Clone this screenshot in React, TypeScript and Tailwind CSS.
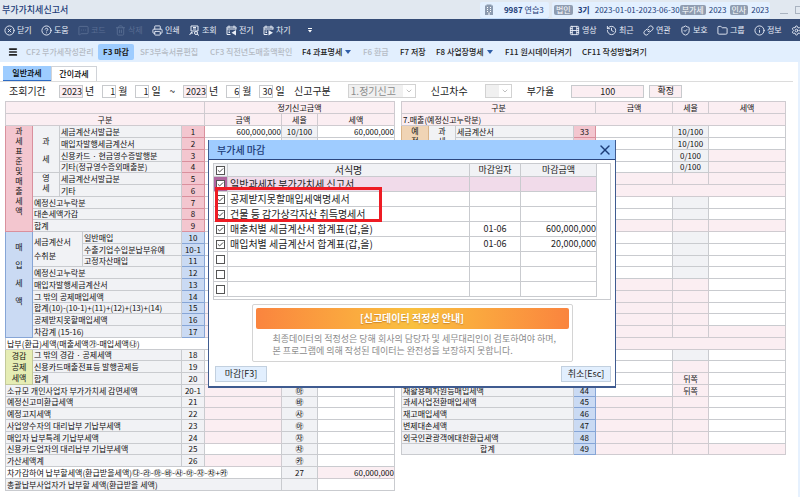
import type { ReactNode } from "react";
import clsx from "clsx";
import {
    Check,
    ChevronDown,
    CircleHelp,
    CircleX,
    Film,
    Folder,
    History,
    Info,
    Link,
    Menu,
    MessageSquareMore,
    Printer,
    Settings,
    ShieldCheck,
    Trash2,
    X,
} from "lucide-react";

type Tone = "white" | "gray" | "pink" | "red" | "blue" | "green" | "orange";

type Head = {
    text: string;
    cols?: number;
    rows?: number;
    tone?: Tone;
    align?: "left" | "center";
    vertical?: "tight" | "loose";
};

type Row = {
    heads: Head[];
    no?: string;
    noTone?: Tone;
    amount?: string;
    amountTone?: Tone;
    rate?: string;
    rateTone?: Tone;
    tax?: string;
    taxTone?: Tone;
};

const tones: Record<Tone, string> = {
    white: "bg-white border-[#c9cbcf]",
    gray: "bg-[#f1f2f5] border-[#c9cbcf]",
    pink: "bg-[#fbeef2] border-[#cfcbd0]",
    red: "bg-[#f3c6cf] border-[#d9909d]",
    blue: "bg-[#cadaf3] border-[#86a5d6]",
    green: "bg-[#e6edb4] border-[#c3c99a]",
    orange: "bg-[#f0d4b5] border-[#d9b48a]",
};

const leftRows: Row[] = [
    {
        heads: [
            { text: "과세표준및매출세액", rows: 9, tone: "red", vertical: "tight" },
            { text: "과세", rows: 4, vertical: "loose" },
            { text: "세금계산서발급분", cols: 2 },
        ],
        no: "1", noTone: "red", amount: "600,000,000", rate: "10/100", tax: "60,000,000",
    },
    { heads: [{ text: "매입자발행세금계산서", cols: 2 }], no: "2", noTone: "red", rate: "10/100" },
    { heads: [{ text: "신용카드 · 현금영수증발행분", cols: 2 }], no: "3", noTone: "red" },
    { heads: [{ text: "기타(정규영수증외매출분)", cols: 2 }], no: "4", noTone: "red" },
    {
        heads: [
            { text: "영세", rows: 2, vertical: "tight" },
            { text: "세금계산서발급분", cols: 2 },
        ],
        no: "5", noTone: "red", taxTone: "pink",
    },
    { heads: [{ text: "기타", cols: 2 }], no: "6", noTone: "red", taxTone: "pink" },
    { heads: [{ text: "예정신고누락분", cols: 3 }], no: "7", noTone: "red" },
    { heads: [{ text: "대손세액가감", cols: 3 }], no: "8", noTone: "red" },
    { heads: [{ text: "합계", cols: 3 }], no: "9", noTone: "red" },
    {
        heads: [
            { text: "매입세액", rows: 9, tone: "blue", vertical: "loose" },
            { text: "세금계산서\n수취분", cols: 2, rows: 3 },
            { text: "일반매입" },
        ],
        no: "10", noTone: "blue",
    },
    { heads: [{ text: "수출기업수입분납부유예" }], no: "10-1", noTone: "blue" },
    { heads: [{ text: "고정자산매입" }], no: "11", noTone: "blue" },
    { heads: [{ text: "예정신고누락분", cols: 3 }], no: "12", noTone: "blue" },
    { heads: [{ text: "매입자발행세금계산서", cols: 3 }], no: "13", noTone: "blue" },
    { heads: [{ text: "그 밖의 공제매입세액", cols: 3 }], no: "14", noTone: "blue" },
    { heads: [{ text: "합계(10)-(10-1)+(11)+(12)+(13)+(14)", cols: 3 }], no: "15", noTone: "blue", amountTone: "pink" },
    { heads: [{ text: "공제받지못할매입세액", cols: 3 }], no: "16", noTone: "blue", amountTone: "pink" },
    { heads: [{ text: "차감계 (15-16)", cols: 3 }], no: "17", noTone: "blue", amountTone: "pink" },
    { heads: [{ text: "납부(환급)세액(매출세액㉮-매입세액㉯)", cols: 6, tone: "white" }] },
    {
        heads: [
            { text: "경감공제세액", rows: 3, tone: "green", vertical: "tight" },
            { text: "그 밖의 경감 · 공제세액", cols: 3 },
        ],
        no: "18",
    },
    { heads: [{ text: "신용카드매출전표등 발행공제등", cols: 3 }], no: "19" },
    { heads: [{ text: "합계", cols: 3 }], no: "20", amountTone: "pink" },
    { heads: [{ text: "소규모 개인사업자 부가가치세 감면세액", cols: 4 }], no: "20-1", amountTone: "pink", rate: "㉲" },
    { heads: [{ text: "예정신고미환급세액", cols: 4 }], no: "21", amountTone: "pink", rate: "㉳" },
    { heads: [{ text: "예정고지세액", cols: 4 }], no: "22", amountTone: "pink", rate: "㉴" },
    { heads: [{ text: "사업양수자의 대리납부 기납부세액", cols: 4 }], no: "23", amountTone: "pink", rate: "㉵" },
    { heads: [{ text: "매입자 납부특례 기납부세액", cols: 4 }], no: "24", amountTone: "pink", rate: "㉶" },
    { heads: [{ text: "신용카드업자의 대리납부 기납부세액", cols: 4 }], no: "25", rate: "㉷" },
    { heads: [{ text: "가산세액계", cols: 4 }], no: "26", amountTone: "pink", rate: "㉸" },
    {
        heads: [{ text: "차가감하여 납부할세액(환급받을세액)㉰-㉱-㉲-㉳-㉴-㉵-㉶-㉷+㉸", cols: 6, tone: "white" }],
        rate: "27", tax: "60,000,000", taxTone: "pink",
    },
    { heads: [{ text: "총괄납부사업자가 납부할 세액(환급받을 세액)", cols: 6 }] },
];

const blank: Head[] = [{ text: "", cols: 3 }];

const rightRows: Row[] = [
    {
        heads: [
            { text: "예정", rows: 5, tone: "orange", vertical: "tight" },
            { text: "과세", rows: 2, vertical: "tight" },
            { text: "세금계산서" },
        ],
        no: "33", noTone: "red", rate: "10/100",
    },
    { heads: [{ text: "기타" }], no: "34", noTone: "red", rate: "10/100" },
    { heads: [{ text: "", cols: 2 }], noTone: "red", rate: "0/100", taxTone: "pink" },
    { heads: [{ text: "", cols: 2 }], noTone: "red", rate: "0/100", taxTone: "pink" },
    { heads: [{ text: "", cols: 2 }], noTone: "red", amountTone: "pink", rateTone: "pink", taxTone: "pink" },
    { heads: [{ text: "", cols: 7, tone: "pink" }] },
    { heads: blank, noTone: "blue" },
    { heads: blank, noTone: "blue" },
    { heads: blank, noTone: "blue", amountTone: "pink", rateTone: "pink", taxTone: "pink" },
    { heads: blank, noTone: "blue" },
    { heads: blank, noTone: "blue" },
    { heads: blank, noTone: "blue" },
    { heads: blank, noTone: "blue" },
    { heads: blank, noTone: "blue", amountTone: "pink", rateTone: "pink" },
    { heads: blank, noTone: "blue", amountTone: "pink", rateTone: "pink" },
    { heads: blank, noTone: "blue", amountTone: "pink", rateTone: "pink" },
    { heads: blank, noTone: "blue", amountTone: "pink", rateTone: "pink" },
    { heads: blank, noTone: "blue", amountTone: "pink", rateTone: "pink", taxTone: "pink" },
    { heads: [{ text: "", cols: 7, tone: "pink" }] },
    { heads: blank, noTone: "blue" },
    { heads: blank, noTone: "blue", rateTone: "pink" },
    { heads: blank, noTone: "blue", rate: "뒤쪽", rateTone: "pink" },
    { heads: [{ text: "재활용폐자원등매입세액", cols: 3 }], no: "44", noTone: "blue", rate: "뒤쪽", rateTone: "pink" },
    { heads: [{ text: "과세사업전환매입세액", cols: 3 }], no: "45", noTone: "blue", amountTone: "pink", rateTone: "pink" },
    { heads: [{ text: "재고매입세액", cols: 3 }], no: "46", noTone: "blue", amountTone: "pink", rateTone: "pink" },
    { heads: [{ text: "변제대손세액", cols: 3 }], no: "47", noTone: "blue", amountTone: "pink", rateTone: "pink" },
    { heads: [{ text: "외국인관광객에대한환급세액", cols: 3 }], no: "48", noTone: "blue", amountTone: "pink", rateTone: "pink" },
    { heads: [{ text: "합계", cols: 3, align: "center" }], no: "49", noTone: "blue", amountTone: "pink", rateTone: "pink", taxTone: "pink" },
];

const documents = [
    { name: "일반과세자 부가가치세 신고서", checked: true, selected: true },
    { name: "공제받지못할매입세액명세서", checked: true },
    { name: "건물 등 감가상각자산 취득명세서", checked: true },
    { name: "매출처별 세금계산서 합계표(갑,을)", checked: true, date: "01-06", amount: "600,000,000" },
    { name: "매입처별 세금계산서 합계표(갑,을)", checked: true, date: "01-06", amount: "20,000,000" },
    { name: "", checked: false },
    { name: "", checked: false },
    { name: "", checked: false },
];

const iconClass = "size-[11px] shrink-0";

const leftTools = [
    { label: "닫기", icon: <CircleX className={iconClass} /> },
    { label: "도움", icon: <CircleHelp className={iconClass} /> },
    { label: "코드", icon: <MessageSquareMore className={iconClass} />, disabled: true },
    { label: "삭제", icon: <Trash2 className={iconClass} />, disabled: true },
    { label: "인쇄", icon: <Printer className={iconClass} /> },
    { label: "조회", icon: <LookupIcon /> },
    { label: "전기", icon: <PeriodIcon back /> },
    { label: "차기", icon: <PeriodIcon /> },
];

const rightTools = [
    { label: "영상", icon: <Film className={iconClass} /> },
    { label: "최근", icon: <History className={iconClass} /> },
    { label: "연관", icon: <Link className={iconClass} /> },
    { label: "보호", icon: <ShieldCheck className={iconClass} /> },
    { label: "그룹", icon: <Folder className={iconClass} /> },
    { label: "정보", icon: <Info className={iconClass} /> },
];

const functionKeys = [
    { label: "CF2 부가세작성관리", width: "w-[72px]", disabled: true },
    { label: "F3 마감", width: "w-9", active: true },
    { label: "SF3부속서류편집", width: "w-[70px]", disabled: true },
    { label: "CF3 직전년도매출액확인", width: "w-[92px]", disabled: true },
    { label: "F4 과표명세", width: "w-[61px]", menu: true },
    { label: "F6 환급", width: "w-[37px]", disabled: true },
    { label: "F7 저장", width: "w-9" },
    { label: "F8 사업장명세", width: "w-[69px]", menu: true },
    { label: "F11 원시데이타켜기", width: "w-[77px]" },
    { label: "CF11 작성방법켜기", width: "w-[77px]" },
];

function LookupIcon() {
    return (
        <svg viewBox="0 0 22 22" className={iconClass} fill="none" stroke="currentColor" strokeWidth="2">
            <path d="M4 2h14v10H4zM8 5h6M8 8h6M3 16h5M1 20l5-6" />
            <circle cx="14" cy="16" r="3" />
            <path d="M16 18l4 3" />
        </svg>
    );
}

function PeriodIcon({ back = false }: { back?: boolean }) {
    return (
        <svg viewBox="0 0 22 22" className={iconClass} fill="none" stroke="currentColor" strokeWidth="2">
            <path d="M9 19H2V4h18v5M2 8h18M6 1v5M16 1v5M5 12h3M5 15h3" />
            <path d={back ? "M20 10v11l-9-5.5z" : "M11 10v11l9-5.5z"} fill="currentColor" stroke="none" />
        </svg>
    );
}

function BuildingIcon() {
    return (
        <svg viewBox="0 0 20 22" className="h-[11px] w-[10px]">
            <path d="M5 1h10v2h3v19H2V3h3z" fill="#8c9bb0" />
            <path d="M6 6h2v2H6zM12 6h2v2h-2zM6 10h2v2H6zM12 10h2v2h-2zM6 14h2v2H6zM12 14h2v2h-2zM9 17h2v5H9z" fill="#fff" />
        </svg>
    );
}

function Badge({ children }: { children: ReactNode }) {
    return <span className="rounded-xs bg-[#8f9db1] px-0.5 leading-[10px] text-white">{children}</span>;
}

function TitleBar() {
    return (
        <header className="flex h-[19px] items-center bg-[#e1e8f0] pl-0.5 text-[#1c3c78]">
            <h1 className="flex-1 text-[9px] font-medium">부가가치세신고서</h1>
            <div className="flex h-4 w-[69px] items-center rounded-xs bg-[#e3f0ff] pl-1 shadow-[0_1px_0_#c3dcf8]">
                <BuildingIcon />
                <span className="pl-2.5"><b>9987</b> 연습3</span>
            </div>
            <div className="ml-[3px] flex h-4 items-center rounded-xs bg-[#e3f0ff] pl-0.5">
                <Badge>법인</Badge>
                <b className="px-[5px]">3기</b>
                <span>2023-01-01-2023-06-30</span>
                <Badge>부가세</Badge>
                <span className="px-[3px]">2023</span>
                <Badge>인사</Badge>
                <span className="pr-px pl-[3px]">2023</span>
            </div>
            <div className="ml-2.5 flex w-5 shrink-0 items-end gap-[7px] overflow-hidden">
                <span className="w-2 shrink-0 border-b border-[#a9b3c0]" />
                <span className="h-2 w-2 shrink-0 border border-[#a9b3c0]" />
            </div>
        </header>
    );
}

function ToolBar() {
    return (
        <nav className="flex h-[22px] items-center overflow-hidden bg-[#354c76] pl-1 text-[#e9eef7]">
            {leftTools.map((tool) => (
                <button
                    key={tool.label}
                    disabled={tool.disabled}
                    className="flex w-[37px] shrink-0 items-center gap-0.5 whitespace-nowrap disabled:text-[#596d93]"
                >
                    {tool.icon}
                    {tool.label}
                </button>
            ))}
            <svg viewBox="0 0 8 10" className="ml-2 h-[5px] w-1 fill-white">
                <path d="M0 0h8v2H0zM0 4h8L4 9z" />
            </svg>
            <div className="ml-auto flex">
                {rightTools.map((tool) => (
                    <button key={tool.label} className="flex w-[37px] shrink-0 items-center gap-0.5 whitespace-nowrap">
                        {tool.icon}
                        {tool.label}
                    </button>
                ))}
                <button aria-label="설정" className="w-[9px] overflow-hidden">
                    <Settings className={iconClass} />
                </button>
            </div>
        </nav>
    );
}

function FunctionBar() {
    return (
        <nav className="flex h-[21px] items-center bg-[#e2effe] pl-2 text-[#222]">
            <Menu className="mr-2 size-[10px]" strokeWidth={4} />
            {functionKeys.map((key) => (
                <button
                    key={key.label}
                    disabled={key.disabled}
                    className={clsx(
                        "flex h-4 shrink-0 items-center gap-[3px] whitespace-nowrap",
                        key.width,
                        key.disabled && "text-[#b5bbc4]",
                        key.active ? "mr-1.5 justify-center rounded-xs bg-[#9dccff] font-bold" : "font-medium"
                    )}
                >
                    {key.label}
                    {key.menu && (
                        <svg viewBox="0 0 6 4" className="h-1 w-1.5 fill-[#2f5ea8]">
                            <path d="M0 0h6L3 4z" />
                        </svg>
                    )}
                </button>
            ))}
        </nav>
    );
}

function Tabs() {
    return (
        <div className="mr-[5px] flex h-5 items-end border-b border-[#dcdcdc] pl-[3px]">
            <button className="h-[15px] w-12 border-b border-[#2d6bc4] bg-[#9dccff] font-medium">일반과세</button>
            <button className="h-[15px] w-[46px] border border-b-0 border-[#d0d3d8] bg-white font-medium">간이과세</button>
        </div>
    );
}

function Field({
    label,
    value,
    unit,
    wide = false,
}: {
    label: string;
    value: string;
    unit: string;
    wide?: boolean;
}) {
    return (
        <label className="flex items-center gap-0.5">
            <input
                aria-label={label}
                defaultValue={value}
                className={clsx(
                    "h-[13px] border border-[#c8cacd] text-right text-[9px]",
                    wide ? "w-6 bg-[#fbeef2]" : "w-3.5 bg-white"
                )}
            />
            {unit}
        </label>
    );
}

function DropDown({ label, value, width }: { label: string; value: string; width: string }) {
    return (
        <label className="flex items-center gap-[17px]">
            {label}
            <span className={clsx("relative", width)}>
                <select
                    disabled
                    defaultValue={value}
                    className="block h-[14px] w-full appearance-none border border-[#d2d2d2] bg-[#f0f0f0] pl-0.5 leading-3 text-[#8c8c8c] opacity-100"
                >
                    <option>{value}</option>
                </select>
                <span className="absolute inset-y-px right-px flex w-3 items-center justify-center bg-white text-[#a0a0a0]">
                    <ChevronDown className="size-2" />
                </span>
            </span>
        </label>
    );
}

function FilterBar() {
    return (
        <form className="flex h-[18px] items-center pl-[9px] text-[10px] text-[#222]">
            <span className="w-[50px]">조회기간</span>
            <div className="flex w-[124px] items-center gap-2">
                <Field label="시작 년" value="2023" unit="년" wide />
                <Field label="시작 월" value="1" unit="월" />
                <Field label="시작 일" value="1" unit="일" />
                <span className="pl-px">~</span>
            </div>
            <div className="flex w-[111px] items-center gap-2">
                <Field label="종료 년" value="2023" unit="년" wide />
                <Field label="종료 월" value="6" unit="월" />
                <Field label="종료 일" value="30" unit="일" />
            </div>
            <DropDown label="신고구분" value="1.정기신고" width="w-[68px]" />
            <span className="w-[15px]" />
            <DropDown label="신고차수" value="" width="w-[27px]" />
            <label className="ml-[15px] flex items-center gap-[17px]">
                부가율
                <input
                    defaultValue="100"
                    className="h-[13px] w-[73px] border border-[#c8cacd] bg-[#fbeef2] text-center text-[9px]"
                />
            </label>
            <button type="button" className="ml-[5px] h-[13px] w-[33px] border border-[#c8cacd] bg-[#fbeef2] text-[9px] leading-[10px]">
                확정
            </button>
        </form>
    );
}

function Cell({
    tone = "white",
    align = "center",
    cols,
    rows,
    className,
    children,
}: {
    tone?: Tone;
    align?: "left" | "center" | "right";
    cols?: number;
    rows?: number;
    className?: string;
    children?: ReactNode;
}) {
    return (
        <td
            colSpan={cols}
            rowSpan={rows}
            className={clsx(
                "border p-0",
                tones[tone],
                rows ? "leading-[14px] whitespace-pre-line" : "overflow-hidden leading-[10px] whitespace-nowrap",
                align === "center" && "text-center",
                align === "left" && "pl-px text-left",
                align === "right" && "text-right",
                className
            )}
        >
            {children}
        </td>
    );
}

function VerticalText({ text, spacing }: { text: string; spacing: "tight" | "loose" }) {
    // six letters stand in pairs, everything else one letter a line
    const pairs = text.length === 6;
    const parts = pairs ? text.match(/../g) : text.split("");
    return (
        <div
            className={clsx(
                "flex flex-col items-center",
                pairs ? "leading-[11px]" : "leading-[10px]",
                spacing === "loose" && "gap-2 pt-2.5"
            )}
        >
            {parts?.map((part, i) => <span key={i}>{part}</span>)}
        </div>
    );
}

function ReportRow({ row }: { row: Row }) {
    const full = row.heads[0].cols === 7;
    const numberless = row.heads[0].cols === 6;
    return (
        <tr>
            {row.heads.map((head, i) => (
                <Cell
                    key={i}
                    tone={head.tone ?? "gray"}
                    cols={head.cols}
                    rows={head.rows}
                    align={head.align ?? (head.vertical ? "center" : "left")}
                    className={head.vertical && "align-top"}
                >
                    {head.vertical ? <VerticalText text={head.text} spacing={head.vertical} /> : head.text}
                </Cell>
            ))}
            {!full && (
                <>
                    {!numberless && <Cell tone={row.noTone ?? "gray"}>{row.no}</Cell>}
                    {!numberless && <Cell tone={row.amountTone} align="right">{row.amount}</Cell>}
                    <Cell tone={row.rateTone ?? "gray"}>{row.rate}</Cell>
                    <Cell tone={row.taxTone} align="right">{row.tax}</Cell>
                </>
            )}
        </tr>
    );
}

const tableClass =
    "w-full table-fixed border-collapse text-[#111] [&_tr]:h-3 [&_tr:nth-child(4n)]:h-[11px]";

function LeftTable() {
    return (
        <table className={tableClass}>
            <colgroup>
                <col className="w-[27px]" />
                <col className="w-[27px]" />
                <col className="w-[23px]" />
                <col />
                <col className="w-[23px]" />
                <col className="w-[77px]" />
                <col className="w-9" />
                <col className="w-[77px]" />
            </colgroup>
            <thead>
                <tr>
                    <Cell tone="pink" cols={5} />
                    <Cell tone="pink" cols={3}>정기신고금액</Cell>
                </tr>
                <tr>
                    <Cell tone="pink" cols={5}>구분</Cell>
                    <Cell tone="pink">금액</Cell>
                    <Cell tone="pink">세율</Cell>
                    <Cell tone="pink">세액</Cell>
                </tr>
            </thead>
            <tbody>
                {leftRows.map((row, i) => <ReportRow key={i} row={row} />)}
            </tbody>
        </table>
    );
}

function RightTable() {
    return (
        <table className={tableClass}>
            <colgroup>
                <col className="w-[27px]" />
                <col className="w-[27px]" />
                <col />
                <col className="w-[22px]" />
                <col className="w-[77px]" />
                <col className="w-9" />
                <col className="w-[77px]" />
            </colgroup>
            <thead>
                <tr>
                    <Cell tone="pink" cols={4}>구분</Cell>
                    <Cell tone="pink">금액</Cell>
                    <Cell tone="pink">세율</Cell>
                    <Cell tone="pink">세액</Cell>
                </tr>
                <tr>
                    <Cell tone="pink" cols={7} align="left">7.매출(예정신고누락분)</Cell>
                </tr>
            </thead>
            <tbody>
                {rightRows.map((row, i) => <ReportRow key={i} row={row} />)}
            </tbody>
        </table>
    );
}

function CheckBox({ label, checked }: { label: string; checked: boolean }) {
    return (
        <span className="relative mx-auto block size-[9px]">
            <input
                type="checkbox"
                aria-label={label}
                defaultChecked={checked}
                className="peer block size-[9px] appearance-none border border-[#555] bg-white"
            />
            <Check className="pointer-events-none absolute inset-px hidden size-[7px] text-[#333] peer-checked:block" strokeWidth={3} />
        </span>
    );
}

function ClosingDialog() {
    const cell = "border border-[#c9cbcf] p-0";
    return (
        <div
            role="dialog"
            aria-label="부가세 마감"
            className="absolute top-[140px] left-[208px] w-[408px] border border-t-0 border-b-2 border-[#3f5b90] bg-white text-[#222]"
        >
            <div className="flex h-5 items-center justify-between border-b border-[#2c4780] bg-[#9fccff] pr-0.5 pl-2 text-[10px] text-[#1c3c78]">
                <h2 className="font-medium">부가세 마감</h2>
                <button aria-label="닫기">
                    <X className="size-4" />
                </button>
            </div>
            <div className="px-1 pt-[3px] pb-1">
                <div className="relative border border-[#c9cbcf] pr-3 pb-0.5">
                    <table className="-mt-px -ml-px w-full table-fixed border-collapse text-[10px] leading-[14px]">
                        <colgroup>
                            <col className="w-3.5" />
                            <col />
                            <col className="w-[51px]" />
                            <col className="w-[76px]" />
                        </colgroup>
                        <thead>
                            <tr className="h-[13px] bg-[#f1f2f5] leading-3">
                                <th className={cell}><CheckBox label="전체" checked /></th>
                                <th className={clsx(cell, "font-normal")}>서식명</th>
                                <th className={clsx(cell, "text-[9px] font-normal")}>마감일자</th>
                                <th className={clsx(cell, "text-[9px] font-normal")}>마감금액</th>
                            </tr>
                        </thead>
                        <tbody>
                            {documents.map((doc, i) => (
                                <tr key={i} className={clsx("h-[15px]", doc.selected && "bg-[#f1dbea]")}>
                                    <td className={clsx(cell, doc.selected && "bg-[#b0669f]")}>
                                        <CheckBox label={doc.name} checked={doc.checked} />
                                    </td>
                                    <td className={clsx(cell, "pl-0.5")}>{doc.name}</td>
                                    <td className={clsx(cell, "text-center text-[9px]")}>{doc.date}</td>
                                    <td className={clsx(cell, "text-right text-[9px]")}>{doc.amount}</td>
                                </tr>
                            ))}
                        </tbody>
                    </table>
                    <div className="absolute top-[23px] left-px h-[35px] w-[167px] border-3 border-[#ee1c24]" />
                </div>
                <div className="mx-auto mt-1 w-[321px] rounded-xs border border-[#d4d4d4] p-[3px] pb-1">
                    <div className="h-[21px] rounded-xs bg-linear-to-r from-[#fa843e] via-[#f9c03f] to-[#fa843e] text-center text-[10px] leading-5 font-bold text-white text-shadow-[0_1px_1px_#a0602080]">
                        [신고데이터 적정성 안내]
                    </div>
                    <p className="pt-1 pl-[17px] text-[9px] leading-3 whitespace-nowrap text-[#8a8a8a]">
                        최종데이터의 적정성은 당해 회사의 담당자 및 세무대리인이 검토하여야 하며,
                        <br />
                        본 프로그램에 의해 작성된 데이터는 완전성을 보장하지 못합니다.
                    </p>
                </div>
                <div className="mt-1 flex justify-between pl-0.5 text-[9px] leading-3">
                    <button className="h-4 w-[52px] border border-[#c2d0df] bg-[#e2effe]">마감[F3]</button>
                    <button className="h-4 w-[50px] border border-[#c2d0df] bg-[#e2effe]">취소[Esc]</button>
                </div>
            </div>
        </div>
    );
}

export default function App() {
    return (
        <div className="relative min-h-screen overflow-hidden bg-white font-['Noto_Sans_CJK_KR',sans-serif] text-[8px] leading-3">
            <TitleBar />
            <ToolBar />
            <FunctionBar />
            <main className="border-r-2 border-[#e6f1fe] pb-2">
                <Tabs />
                <FilterBar />
                <div className="mt-px flex items-start gap-1.5 pr-3 pl-[5px]">
                    <div className="min-w-0 flex-[390]">
                        <LeftTable />
                    </div>
                    <div className="min-w-0 flex-[385]">
                        <RightTable />
                    </div>
                </div>
            </main>
            <ClosingDialog />
        </div>
    );
}
